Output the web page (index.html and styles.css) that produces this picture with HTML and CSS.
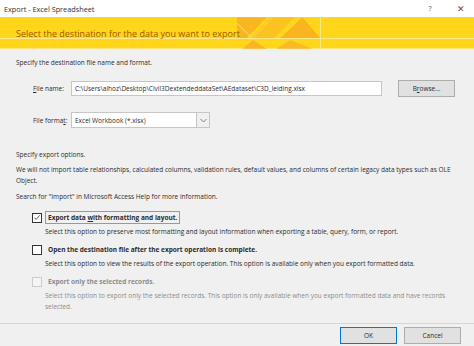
FILE: index.html
```html
<!DOCTYPE html>
<html lang="en">

<head>
  <meta charset="UTF-8" />
  <title>Export - Excel Spreadsheet</title>
  <link rel="stylesheet" href="styles.css">
</head>

<body>
  <div class="dialog">
    <div class="titlebar">
      <span class="title">Export - Excel Spreadsheet</span>
      <span class="title-btn help">?</span>
      <span class="title-btn close">✕</span>
    </div>

    <div class="banner">
      <div class="banner-text">Select the destination for the data you want to export</div>
      <svg class="banner-art" width="84" height="32" viewBox="0 0 84 32">
        <polygon points="0,0 30,0 10,21 0,21" fill="#f7a823" opacity="0.7" />
        <polygon points="14,21 34,0 58,0 38,21" fill="#f9b425" opacity="0.6" />
        <polygon points="44,21 66,0 84,21" fill="#f7a823" opacity="0.75" />
        <polygon points="6,32 16,23 30,32" fill="#f9ad2a" opacity="0.8" />
        <polygon points="40,32 54,23 76,32" fill="#f9ad2a" opacity="0.7" />
        <line x1="0" y1="6" x2="14" y2="20" stroke="#fde38a" stroke-width="0.8" />
        <line x1="16" y1="21" x2="36" y2="0" stroke="#fde38a" stroke-width="0.6" />
      </svg>
    </div>

    <div class="content">
      <p class="section">Specify the destination file name and format.</p>

      <div class="field-row name-row">
        <label class="field-label"><u>F</u>ile name:</label>
        <div class="textbox">C:\Users\alhoz\Desktop\Civil3DextendeddataSet\AEdataset\C3D_leiding.xlsx</div>
        <button class="btn browse">B<u>r</u>owse...</button>
      </div>

      <div class="field-row format-row">
        <label class="field-label">File forma<u>t</u>:</label>
        <div class="select">
          <span>Excel Workbook (*.xlsx)</span>
          <span class="select-arrow">
            <svg width="7" height="5" viewBox="0 0 7 5">
              <polyline points="0.5,1 3.5,4 6.5,1" fill="none" stroke="#777" stroke-width="0.9" />
            </svg>
          </span>
        </div>
      </div>

      <p class="section options-title">Specify export options.</p>
      <p class="note">We will not import table relationships, calculated columns, validation rules, default values, and columns of certain legacy data types such as OLE Object.</p>
      <p class="note search">Search for "Import" in Microsoft Access Help for more information.</p>

      <div class="option first">
        <div class="check-line">
          <span class="checkbox checked">
            <svg width="9" height="9" viewBox="0 0 9 9">
              <polyline points="1.5,4.6 3.5,6.6 7.6,2" fill="none" stroke="#333" stroke-width="0.9" />
            </svg>
          </span>
          <span class="option-label focused">Export data <u>w</u>ith formatting and layout.</span>
        </div>
        <p class="option-desc">Select this option to preserve most formatting and layout information when exporting a table, query, form, or report.</p>
      </div>

      <div class="option">
        <div class="check-line">
          <span class="checkbox"></span>
          <span class="option-label">Open the destination file after the export operation is complete.</span>
        </div>
        <p class="option-desc">Select this option to view the results of the export operation. This option is available only when you export formatted data.</p>
      </div>

      <div class="option disabled">
        <div class="check-line">
          <span class="checkbox"></span>
          <span class="option-label">Export only the selected records.</span>
        </div>
        <p class="option-desc">Select this option to export only the selected records. This option is only available when you export formatted data and have records selected.</p>
      </div>
    </div>

    <div class="footer">
      <button class="btn ok">OK</button>
      <button class="btn">Cancel</button>
    </div>
  </div>
</body>

</html>
```

FILE: styles.css
```css
:root {
  --body-bg: #f0f0f0;
  --text: #2b2b2b;
  --banner: #ffd61a;
  --banner-text: #a05800;
  --border: #adadad;
}

* {
  box-sizing: border-box;
}

body {
  margin: 0;
  font-family: 'Open Sans', 'Noto Sans', sans-serif;
  font-size: 6.5px;
  color: var(--text);
  background: var(--body-bg);
}

p {
  margin: 0;
}

.dialog {
  width: 474px;
  height: 346px;
  display: flex;
  flex-direction: column;
  overflow: hidden;
}

.titlebar {
  height: 17px;
  background: #fff;
  display: flex;
  align-items: center;
  padding: 0 0 0 4px;
  font-size: 7.3px;
  color: #333;
}

.title {
  flex: 1;
}

.title-btn {
  text-align: center;
  color: #555;
}

.help {
  width: 36px;
  font-size: 7px;
}

.close {
  width: 26px;
  font-size: 9px;
}

.banner {
  height: 32px;
  background: var(--banner);
  position: relative;
  display: flex;
  align-items: center;
  padding-left: 16px;
  border-bottom: 1px solid #fbe27a;
}

.banner::after {
  content: '';
  position: absolute;
  left: 0;
  right: 0;
  top: 21px;
  height: 1px;
  background: #fde98e;
}

.banner-text {
  font-size: 9px;
  color: var(--banner-text);
  position: relative;
  z-index: 1;
  margin-top: 2px;
  white-space: nowrap;
}

.banner-art {
  position: absolute;
  left: 237px;
  top: 0;
  border-right: 1px solid #ffe87a;
}

.content {
  flex: 1;
  padding: 8px 10px 0 16px;
}

.section {
  line-height: 11px;
}

.field-row {
  display: flex;
  align-items: center;
  padding-left: 17px;
}

.name-row {
  margin-top: 12px;
}

.format-row {
  margin-top: 15px;
}

.field-label {
  width: 38px;
  white-space: nowrap;
}

.textbox {
  width: 311px;
  height: 15px;
  background: #fff;
  border: 1px solid #c6c6c6;
  padding: 0 3px;
  line-height: 13px;
  white-space: nowrap;
  overflow: hidden;
}

.btn {
  font: inherit;
  color: var(--text);
  background: #e1e1e1;
  border: 1px solid var(--border);
  width: 57px;
  height: 17px;
  padding: 0;
}

.browse {
  margin-left: 16px;
}

.select {
  width: 139px;
  height: 16px;
  background: #fff;
  border: 1px solid #c6c6c6;
  display: flex;
  align-items: center;
  justify-content: space-between;
  padding-left: 3px;
}

.select-arrow {
  width: 13px;
  height: 14px;
  background: #f0f0f0;
  border-left: 1px solid #c6c6c6;
  display: flex;
  align-items: center;
  justify-content: center;
}

.options-title {
  margin-top: 21px;
}

.note {
  margin-top: 4px;
  line-height: 11px;
}

.note.search {
  margin-top: 5px;
}

.option {
  padding-left: 16px;
  margin-top: 6px;
}

.option.first {
  margin-top: 9px;
}

.check-line {
  display: flex;
  align-items: center;
  gap: 2px;
  height: 13px;
}

.checkbox {
  width: 10px;
  height: 10px;
  border: 1px solid #333;
  background: #fff;
  display: flex;
  align-items: center;
  justify-content: center;
  margin-right: 1px;
}

.option-label {
  font-weight: 700;
  padding: 1px 2px;
  border: 1px solid transparent;
}

.option-label.focused {
  border-color: #999;
}

.option-desc {
  padding-left: 13px;
  margin-top: 2px;
  line-height: 11px;
}

.disabled .checkbox {
  border-color: #ccc;
  background: #f4f4f4;
}

.disabled .option-label,
.disabled .option-desc {
  color: #8c8c8c;
}

.footer {
  height: 23px;
  border-top: 1px solid #d6d6d6;
  display: flex;
  justify-content: flex-end;
  align-items: center;
  gap: 7px;
  padding-right: 13px;
}

.ok {
  border-color: #0078d7;
}
```
